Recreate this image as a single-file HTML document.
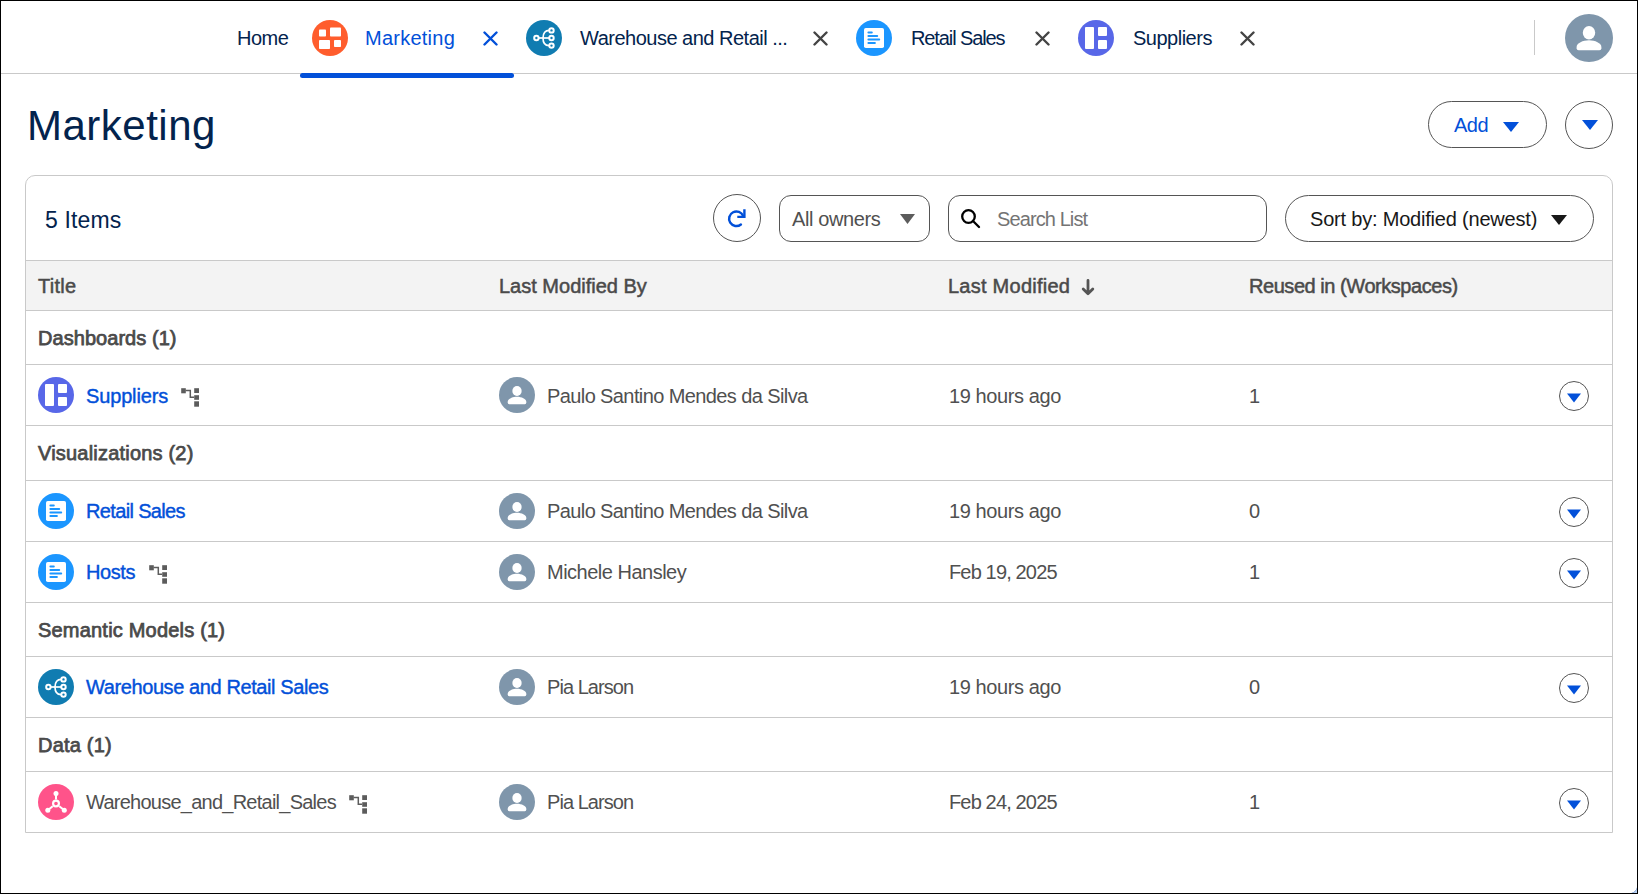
<!DOCTYPE html>
<html><head><meta charset="utf-8">
<style>
*{box-sizing:border-box;margin:0;padding:0}
html,body{width:1638px;height:894px;overflow:hidden;background:#fff}
body{position:relative;font-family:"Liberation Sans",sans-serif;color:#03234d}
.frame{position:absolute;left:0;top:0;width:1638px;height:894px;border:1px solid #000;pointer-events:none;z-index:50}
.a{position:absolute;white-space:nowrap}
.t19{font-size:20px;line-height:22px;letter-spacing:-0.5px}
.navy{color:#03234d}
.gray{color:#505050}
.link{color:#0250d9}
#rows .link{-webkit-text-stroke:0.4px #0250d9}
.ico{position:absolute}
.hdr{color:#4a4a4a;-webkit-text-stroke:0.75px #4a4a4a}
.colh{-webkit-text-stroke:0.5px #4a4a4a}
</style></head>
<body>
<div class="frame"></div>
<div class="a" style="left:1630px;top:886px;width:7px;height:7px;background:radial-gradient(circle at 0 0,rgba(255,255,255,0) 6.6px,#8aa6d4 7.2px,#b9d3f5 8px)"></div>


<!-- ===== Top tab bar ===== -->
<div class="a" style="left:1px;top:73px;width:1636px;height:1px;background:#c9c9c9"></div>
<div class="a" style="left:300px;top:73px;width:214px;height:5px;background:#0250d9;border-radius:3px"></div>

<div class="a t19 navy" style="left: 237px; top: 27px; letter-spacing: -0.5px;">Home</div>

<!-- Marketing tab -->
<svg class="ico" style="left:312px;top:20px" width="36" height="36" viewBox="-18 -18 36 36">
 <circle r="18" fill="#ff5d2d"></circle>
 <g fill="#fff">
  <rect x="-11" y="-8.5" width="7" height="7" rx="0.8"></rect>
  <rect x="0" y="-10.5" width="11" height="9" rx="0.8"></rect>
  <rect x="-11" y="2" width="11" height="9" rx="0.8"></rect>
  <rect x="4" y="2" width="7" height="7" rx="0.8"></rect>
 </g>
</svg>
<div class="a t19 link" style="left: 365px; top: 27px; letter-spacing: 0.25px;">Marketing</div>
<svg class="ico" style="left:483px;top:31px" width="15" height="15" viewBox="0 0 15 15"><path d="M1.5 1.5L13.5 13.5M13.5 1.5L1.5 13.5" stroke="#0250d9" stroke-width="2.4" stroke-linecap="round"></path></svg>

<!-- Warehouse tab -->
<svg class="ico" style="left:526px;top:20px" width="36" height="36" viewBox="-18 -18 36 36">
 <circle r="18" fill="#107cb1"></circle>
 <g fill="none" stroke="#fff" stroke-width="1.7">
  <path d="M-5 0H5"></path>
  <path d="M5 -7.6C1.5 -7.6 -1 -5 -1 0C-1 5 1.5 7.6 5 7.6"></path>
  <g stroke-width="2"><circle cx="-7.6" cy="0" r="2.2"></circle><circle cx="7.5" cy="-7.6" r="2.2"></circle><circle cx="7.5" cy="0" r="2.2"></circle><circle cx="7.5" cy="7.6" r="2.2"></circle></g>
 </g>
</svg>
<div class="a t19 navy" style="left: 580px; top: 27px; letter-spacing: -0.5px;">Warehouse and Retail ...</div>
<svg class="ico" style="left:813px;top:31px" width="15" height="15" viewBox="0 0 15 15"><path d="M1.5 1.5L13.5 13.5M13.5 1.5L1.5 13.5" stroke="#444" stroke-width="2.4" stroke-linecap="round"></path></svg>

<!-- Retail Sales tab -->
<svg class="ico" style="left:856px;top:20px" width="36" height="36" viewBox="-18 -18 36 36">
 <circle r="18" fill="#1b96ff"></circle>
 <rect x="-10" y="-10" width="20" height="20" rx="1.8" fill="#fff"></rect>
 <g stroke="#1b96ff" stroke-width="2" stroke-linecap="round">
  <path d="M-5.6 -5.5H-2.2M-5.6 -2H3.2M-5.6 1.5H5.2M-5.6 5H0.9"></path>
 </g>
</svg>
<div class="a t19 navy" style="left: 911px; top: 27px; letter-spacing: -1.1px;">Retail Sales</div>
<svg class="ico" style="left:1035px;top:31px" width="15" height="15" viewBox="0 0 15 15"><path d="M1.5 1.5L13.5 13.5M13.5 1.5L1.5 13.5" stroke="#444" stroke-width="2.4" stroke-linecap="round"></path></svg>

<!-- Suppliers tab -->
<svg class="ico" style="left:1078px;top:20px" width="36" height="36" viewBox="-18 -18 36 36">
 <circle r="18" fill="#5867e8"></circle>
 <g fill="#fff">
  <rect x="-11" y="-11" width="9" height="22" rx="1"></rect>
  <rect x="2" y="-11" width="9" height="9" rx="1"></rect>
  <rect x="2" y="2" width="9" height="9" rx="1"></rect>
 </g>
</svg>
<div class="a t19 navy" style="left: 1133px; top: 27px; letter-spacing: -0.5px;">Suppliers</div>
<svg class="ico" style="left:1240px;top:31px" width="15" height="15" viewBox="0 0 15 15"><path d="M1.5 1.5L13.5 13.5M13.5 1.5L1.5 13.5" stroke="#444" stroke-width="2.4" stroke-linecap="round"></path></svg>

<div class="a" style="left:1534px;top:20px;width:1px;height:35px;background:#c9c9c9"></div>
<svg class="ico" style="left:1565px;top:14px" width="48" height="48" viewBox="-24 -24 48 48">
 <circle r="24" fill="#7f96ab"></circle>
 <ellipse cx="0" cy="-5.3" rx="6.2" ry="6.7" fill="#fff"></ellipse>
 <path d="M-12.4 10.2V9C-12.4 5 -6 2.2 0 2.2C6 2.2 12.4 5 12.4 9V10.2Q12.4 12.2 10.4 12.2H-10.4Q-12.4 12.2 -12.4 10.2Z" fill="#fff"></path>
</svg>

<!-- ===== Page header ===== -->
<div class="a navy" style="left: 27px; top: 102px; font-size: 42px; line-height: 47px; letter-spacing: 0.5px;">Marketing</div>

<div class="a" style="left:1428px;top:101px;width:119px;height:47px;border:1px solid #555;border-radius:24px"></div>
<div class="a t19 link" style="left:1454px;top:114px">Add</div>
<svg class="ico" style="left:1503px;top:122px" width="16" height="10" viewBox="0 0 16 10"><path d="M0 0H16L8 10Z" fill="#0250d9"></path></svg>

<div class="a" style="left:1565px;top:101px;width:48px;height:48px;border:1px solid #555;border-radius:50%"></div>
<svg class="ico" style="left:1582px;top:120px" width="16" height="10" viewBox="0 0 16 10"><path d="M0 0H16L8 10Z" fill="#0250d9"></path></svg>

<!-- ===== Card ===== -->
<div class="a" style="left:25px;top:175px;width:1588px;height:658px;border:1px solid #c9c9c9;border-radius:10px 10px 0 0"></div>

<div class="a navy" style="left: 45px; top: 208px; font-size: 23px; line-height: 25px; letter-spacing: 0.15px;">5 Items</div>

<div class="a" style="left:713px;top:194px;width:48px;height:48px;border:1px solid #555;border-radius:50%"></div>
<svg class="ico" style="left:725px;top:206px" width="24" height="24" viewBox="-12 -12 24 24">
 <path d="M3.9 6.5A7.3 7.3 0 1 1 6.2 -1.9" fill="none" stroke="#0250d9" stroke-width="2.5" stroke-linecap="round"></path>
 <path d="M6.2 -8.8H8.6V0H0.3V-2.2H6.2Z" fill="#0250d9"></path>
</svg>

<div class="a" style="left:779px;top:195px;width:151px;height:47px;border:1px solid #555;border-radius:12px"></div>
<div class="a t19 gray" style="left: 792px; top: 208px; letter-spacing: -0.4px;">All owners</div>
<svg class="ico" style="left:900px;top:214px" width="15" height="10" viewBox="0 0 15 10"><path d="M0 0H15L7.5 10Z" fill="#5c5c5c"></path></svg>

<div class="a" style="left:948px;top:195px;width:319px;height:47px;border:1px solid #555;border-radius:12px"></div>
<svg class="ico" style="left:958px;top:206px" width="24" height="24" viewBox="0 0 24 24">
 <circle cx="10.5" cy="10.5" r="6.3" fill="none" stroke="#000" stroke-width="2.3"></circle>
 <path d="M15 15L21 21" stroke="#000" stroke-width="2.3" stroke-linecap="round"></path>
</svg>
<div class="a t19" style="left: 997px; top: 208px; color: rgb(116, 116, 116); letter-spacing: -0.9px;">Search List</div>

<div class="a" style="left:1285px;top:195px;width:309px;height:47px;border:1px solid #555;border-radius:24px"></div>
<div class="a t19" style="left: 1310px; top: 208px; color: rgb(24, 24, 24); letter-spacing: -0.2px;">Sort by: Modified (newest)</div>
<svg class="ico" style="left:1551px;top:215px" width="16" height="10" viewBox="0 0 16 10"><path d="M0 0H16L8 10Z" fill="#181818"></path></svg>

<!-- ===== Table header ===== -->
<div class="a" style="left:26px;top:260px;width:1586px;height:51px;background:#f3f3f3;border-top:1px solid #c9c9c9;border-bottom:1px solid #c9c9c9"></div>
<div class="a t19 hdr colh" style="left: 38px; top: 275px; letter-spacing: 0.25px;">Title</div>
<div class="a t19 hdr colh" style="left: 499px; top: 275px; letter-spacing: 0px;">Last Modified By</div>
<div class="a t19 hdr colh" style="left: 948px; top: 275px; letter-spacing: 0.25px;">Last Modified</div>
<svg class="ico" style="left:1080px;top:277px" width="16" height="20" viewBox="0 0 16 20">
 <path d="M8 3.4V16M3.2 12L8 16.8L12.8 12" fill="none" stroke="#555" stroke-width="2.8" stroke-linecap="round" stroke-linejoin="round"></path>
</svg>
<div class="a t19 hdr colh" style="left: 1249px; top: 275px; letter-spacing: -0.45px;">Reused in (Workspaces)</div>

<div id="rows">
<div class="a" style="left:26px;top:364px;width:1586px;height:1px;background:#c9c9c9"></div>
<div class="a" style="left:26px;top:425px;width:1586px;height:1px;background:#c9c9c9"></div>
<div class="a" style="left:26px;top:480px;width:1586px;height:1px;background:#c9c9c9"></div>
<div class="a" style="left:26px;top:541px;width:1586px;height:1px;background:#c9c9c9"></div>
<div class="a" style="left:26px;top:602px;width:1586px;height:1px;background:#c9c9c9"></div>
<div class="a" style="left:26px;top:656px;width:1586px;height:1px;background:#c9c9c9"></div>
<div class="a" style="left:26px;top:717px;width:1586px;height:1px;background:#c9c9c9"></div>
<div class="a" style="left:26px;top:771px;width:1586px;height:1px;background:#c9c9c9"></div>
<div class="a t19 hdr" style="left: 38px; top: 327px; letter-spacing: 0.05px;">Dashboards (1)</div>
<div class="a t19 hdr" style="left: 38px; top: 442px; letter-spacing: 0.2px;">Visualizations (2)</div>
<div class="a t19 hdr" style="left: 38px; top: 619px; letter-spacing: 0.2px;">Semantic Models (1)</div>
<div class="a t19 hdr" style="left: 38px; top: 734px; letter-spacing: 0.2px;">Data (1)</div>
<svg class="ico" style="left:38px;top:377px" width="36" height="36" viewBox="-18 -18 36 36"><circle r="18" fill="#5867e8"></circle><g fill="#fff"><rect x="-11" y="-11" width="9" height="22" rx="1"></rect><rect x="2" y="-11" width="9" height="9" rx="1"></rect><rect x="2" y="2" width="9" height="9" rx="1"></rect></g></svg>
<div class="a t19 link" style="left: 86px; top: 385px; letter-spacing: -0.15px;">Suppliers</div>
<svg class="ico" style="left:181px;top:388px" width="19" height="19" viewBox="0 0 19 19"><g fill="#5c5c5c"><rect x="0.2" y="0.2" width="4.6" height="5.1"></rect><rect x="13.2" y="0.2" width="4.8" height="4.8"></rect><rect x="13.2" y="7.2" width="4.8" height="4.6"></rect><rect x="13.2" y="13.3" width="4.8" height="5.4"></rect></g><path d="M4.5 2.5H9.3V9.3H13" fill="none" stroke="#5c5c5c" stroke-width="1.5"></path></svg>
<svg class="ico" style="left:499px;top:377px" width="36" height="36" viewBox="-18 -18 36 36"><circle r="18" fill="#7f96ab"></circle><ellipse cx="0" cy="-4" rx="4.65" ry="5" fill="#fff"></ellipse><path d="M-9.3 7.6V6.8C-9.3 3.8 -4.5 1.65 0 1.65C4.5 1.65 9.3 3.8 9.3 6.8V7.6Q9.3 9.15 7.8 9.15H-7.8Q-9.3 9.15 -9.3 7.6Z" fill="#fff"></path></svg>
<div class="a t19 gray" style="left: 547px; top: 385px; letter-spacing: -0.6px;">Paulo Santino Mendes da Silva</div>
<div class="a t19 gray" style="left: 949px; top: 385px; letter-spacing: -0.4px;">19 hours ago</div>
<div class="a t19 gray" style="left:1249px;top:385px">1</div>
<div class="a" style="left:1559px;top:381px;width:30px;height:30px;border:1px solid #555;border-radius:50%"></div>
<svg class="ico" style="left:1567px;top:393px" width="14" height="10" viewBox="0 0 14 10"><path d="M0 0.5H14L7 9.5Z" fill="#0250d9"></path></svg>
<svg class="ico" style="left:38px;top:493px" width="36" height="36" viewBox="-18 -18 36 36"><circle r="18" fill="#1b96ff"></circle><rect x="-10" y="-10" width="20" height="20" rx="1.8" fill="#fff"></rect><g stroke="#1b96ff" stroke-width="2" stroke-linecap="round"><path d="M-5.6 -5.5H-2.2M-5.6 -2H3.2M-5.6 1.5H5.2M-5.6 5H0.9"></path></g></svg>
<div class="a t19 link" style="left: 86px; top: 500px; letter-spacing: -0.65px;">Retail Sales</div>
<svg class="ico" style="left:499px;top:493px" width="36" height="36" viewBox="-18 -18 36 36"><circle r="18" fill="#7f96ab"></circle><ellipse cx="0" cy="-4" rx="4.65" ry="5" fill="#fff"></ellipse><path d="M-9.3 7.6V6.8C-9.3 3.8 -4.5 1.65 0 1.65C4.5 1.65 9.3 3.8 9.3 6.8V7.6Q9.3 9.15 7.8 9.15H-7.8Q-9.3 9.15 -9.3 7.6Z" fill="#fff"></path></svg>
<div class="a t19 gray" style="left: 547px; top: 500px; letter-spacing: -0.6px;">Paulo Santino Mendes da Silva</div>
<div class="a t19 gray" style="left: 949px; top: 500px; letter-spacing: -0.4px;">19 hours ago</div>
<div class="a t19 gray" style="left:1249px;top:500px">0</div>
<div class="a" style="left:1559px;top:497px;width:30px;height:30px;border:1px solid #555;border-radius:50%"></div>
<svg class="ico" style="left:1567px;top:509px" width="14" height="10" viewBox="0 0 14 10"><path d="M0 0.5H14L7 9.5Z" fill="#0250d9"></path></svg>
<svg class="ico" style="left:38px;top:554px" width="36" height="36" viewBox="-18 -18 36 36"><circle r="18" fill="#1b96ff"></circle><rect x="-10" y="-10" width="20" height="20" rx="1.8" fill="#fff"></rect><g stroke="#1b96ff" stroke-width="2" stroke-linecap="round"><path d="M-5.6 -5.5H-2.2M-5.6 -2H3.2M-5.6 1.5H5.2M-5.6 5H0.9"></path></g></svg>
<div class="a t19 link" style="left: 86px; top: 561px; letter-spacing: -0.4px;">Hosts</div>
<svg class="ico" style="left:149px;top:565px" width="19" height="19" viewBox="0 0 19 19"><g fill="#5c5c5c"><rect x="0.2" y="0.2" width="4.6" height="5.1"></rect><rect x="13.2" y="0.2" width="4.8" height="4.8"></rect><rect x="13.2" y="7.2" width="4.8" height="4.6"></rect><rect x="13.2" y="13.3" width="4.8" height="5.4"></rect></g><path d="M4.5 2.5H9.3V9.3H13" fill="none" stroke="#5c5c5c" stroke-width="1.5"></path></svg>
<svg class="ico" style="left:499px;top:554px" width="36" height="36" viewBox="-18 -18 36 36"><circle r="18" fill="#7f96ab"></circle><ellipse cx="0" cy="-4" rx="4.65" ry="5" fill="#fff"></ellipse><path d="M-9.3 7.6V6.8C-9.3 3.8 -4.5 1.65 0 1.65C4.5 1.65 9.3 3.8 9.3 6.8V7.6Q9.3 9.15 7.8 9.15H-7.8Q-9.3 9.15 -9.3 7.6Z" fill="#fff"></path></svg>
<div class="a t19 gray" style="left: 547px; top: 561px; letter-spacing: -0.5px;">Michele Hansley</div>
<div class="a t19 gray" style="left: 949px; top: 561px; letter-spacing: -0.85px;">Feb 19, 2025</div>
<div class="a t19 gray" style="left:1249px;top:561px">1</div>
<div class="a" style="left:1559px;top:558px;width:30px;height:30px;border:1px solid #555;border-radius:50%"></div>
<svg class="ico" style="left:1567px;top:570px" width="14" height="10" viewBox="0 0 14 10"><path d="M0 0.5H14L7 9.5Z" fill="#0250d9"></path></svg>
<svg class="ico" style="left:38px;top:669px" width="36" height="36" viewBox="-18 -18 36 36"><circle r="18" fill="#107cb1"></circle><g fill="none" stroke="#fff" stroke-width="1.7"><path d="M-5 0H5"></path><path d="M5 -7.6C1.5 -7.6 -1 -5 -1 0C-1 5 1.5 7.6 5 7.6"></path><g stroke-width="2"><circle cx="-7.6" cy="0" r="2.2"></circle><circle cx="7.5" cy="-7.6" r="2.2"></circle><circle cx="7.5" cy="0" r="2.2"></circle><circle cx="7.5" cy="7.6" r="2.2"></circle></g></g></svg>
<div class="a t19 link" style="left: 86px; top: 676px; letter-spacing: -0.4px;">Warehouse and Retail Sales</div>
<svg class="ico" style="left:499px;top:669px" width="36" height="36" viewBox="-18 -18 36 36"><circle r="18" fill="#7f96ab"></circle><ellipse cx="0" cy="-4" rx="4.65" ry="5" fill="#fff"></ellipse><path d="M-9.3 7.6V6.8C-9.3 3.8 -4.5 1.65 0 1.65C4.5 1.65 9.3 3.8 9.3 6.8V7.6Q9.3 9.15 7.8 9.15H-7.8Q-9.3 9.15 -9.3 7.6Z" fill="#fff"></path></svg>
<div class="a t19 gray" style="left: 547px; top: 676px; letter-spacing: -0.95px;">Pia Larson</div>
<div class="a t19 gray" style="left: 949px; top: 676px; letter-spacing: -0.4px;">19 hours ago</div>
<div class="a t19 gray" style="left:1249px;top:676px">0</div>
<div class="a" style="left:1559px;top:673px;width:30px;height:30px;border:1px solid #555;border-radius:50%"></div>
<svg class="ico" style="left:1567px;top:685px" width="14" height="10" viewBox="0 0 14 10"><path d="M0 0.5H14L7 9.5Z" fill="#0250d9"></path></svg>
<svg class="ico" style="left:38px;top:784px" width="36" height="36" viewBox="-18 -18 36 36"><circle r="18" fill="#ff538a"></circle><g stroke="#fff" stroke-width="2" fill="none"><path d="M0 -8.5V-2.5M-8.2 8.3L-3.3 4.2M8.3 8.3L3.3 4.2"></path><circle cx="0" cy="1.5" r="2.9" stroke-width="2.2"></circle></g><g fill="#fff"><circle cx="0" cy="-8.5" r="2.5"></circle><circle cx="-8.2" cy="8.3" r="2.5"></circle><circle cx="8.3" cy="8.3" r="2.5"></circle></g></svg>
<div class="a t19 gray" style="left: 86px; top: 791px; letter-spacing: -0.75px;">Warehouse_and_Retail_Sales</div>
<svg class="ico" style="left:349px;top:795px" width="19" height="19" viewBox="0 0 19 19"><g fill="#5c5c5c"><rect x="0.2" y="0.2" width="4.6" height="5.1"></rect><rect x="13.2" y="0.2" width="4.8" height="4.8"></rect><rect x="13.2" y="7.2" width="4.8" height="4.6"></rect><rect x="13.2" y="13.3" width="4.8" height="5.4"></rect></g><path d="M4.5 2.5H9.3V9.3H13" fill="none" stroke="#5c5c5c" stroke-width="1.5"></path></svg>
<svg class="ico" style="left:499px;top:784px" width="36" height="36" viewBox="-18 -18 36 36"><circle r="18" fill="#7f96ab"></circle><ellipse cx="0" cy="-4" rx="4.65" ry="5" fill="#fff"></ellipse><path d="M-9.3 7.6V6.8C-9.3 3.8 -4.5 1.65 0 1.65C4.5 1.65 9.3 3.8 9.3 6.8V7.6Q9.3 9.15 7.8 9.15H-7.8Q-9.3 9.15 -9.3 7.6Z" fill="#fff"></path></svg>
<div class="a t19 gray" style="left: 547px; top: 791px; letter-spacing: -0.95px;">Pia Larson</div>
<div class="a t19 gray" style="left: 949px; top: 791px; letter-spacing: -0.85px;">Feb 24, 2025</div>
<div class="a t19 gray" style="left:1249px;top:791px">1</div>
<div class="a" style="left:1559px;top:788px;width:30px;height:30px;border:1px solid #555;border-radius:50%"></div>
<svg class="ico" style="left:1567px;top:800px" width="14" height="10" viewBox="0 0 14 10"><path d="M0 0.5H14L7 9.5Z" fill="#0250d9"></path></svg>
</div>

</body></html>
